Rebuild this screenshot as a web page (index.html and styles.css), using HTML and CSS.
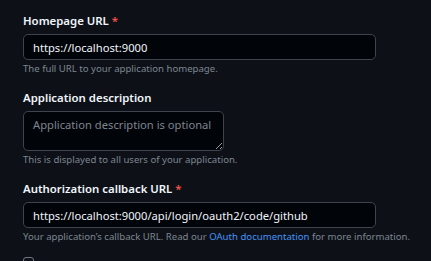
FILE: index.html
```html
<!DOCTYPE html>
<html lang="en">
<head>
    <meta charset="UTF-8">
    <meta name="viewport" content="width=device-width, initial-scale=1.0">
    <title>Register a new OAuth app</title>
    <link rel="stylesheet" href="styles.css">
</head>
<body>
    <form class="app-form">
        <div class="form-group">
            <label class="form-label" for="homepage">Homepage URL <span class="required">*</span></label>
            <input id="homepage" class="form-control" type="text" value="https://localhost:9000">
            <p class="note">The full URL to your application homepage.</p>
        </div>

        <div class="form-group">
            <label class="form-label" for="description">Application description</label>
            <textarea id="description" class="form-control description" placeholder="Application description is optional"></textarea>
            <p class="note">This is displayed to all users of your application.</p>
        </div>

        <div class="form-group">
            <label class="form-label" for="callback">Authorization callback URL <span class="required">*</span></label>
            <input id="callback" class="form-control" type="text" value="https://localhost:9000/api/login/oauth2/code/github">
            <p class="note">Your application’s callback URL. Read our <a href="#">OAuth documentation</a> for more information.</p>
        </div>

        <div class="form-check">
            <span class="checkbox"></span>
        </div>
    </form>
</body>
</html>
```

FILE: styles.css
```css
body {
    margin: 0;
    background-color: #0d1117;
    color: #f0f6fc;
    font-family: "Noto Sans", "Liberation Sans", sans-serif;
    color-scheme: dark;
}
.app-form {
    padding: 12px 0 0 23px;
}
.form-group {
    margin-bottom: 13px;
}
.form-label {
    display: block;
    font-size: 11.4px;
    font-weight: 600;
    line-height: 17px;
    margin-bottom: 5px;
}
.required {
    color: #f85149;
}
.form-control {
    display: block;
    box-sizing: border-box;
    width: 353px;
    height: 26px;
    padding: 0 9px;
    background-color: #010409;
    color: #f0f6fc;
    border: 1px solid #3d444d;
    border-radius: 5px;
    font-family: inherit;
    font-size: 11.2px;
    outline: none;
}
.description {
    width: 201px;
    height: 40px;
    padding: 5px 3px 5px 9px;
    line-height: 16px;
    resize: vertical;
}
.description::placeholder {
    color: #7d8590;
}
.note {
    margin: 2px 0 0;
    font-size: 9.6px;
    line-height: 14px;
    color: #7d8590;
}
.note a {
    color: #4493f8;
    text-decoration: none;
}
.checkbox {
    display: block;
    width: 11px;
    height: 11px;
    margin-top: 1px;
    box-sizing: border-box;
    border: 1px solid #6e7681;
    border-radius: 3px;
    background-color: #0d1117;
}
```
